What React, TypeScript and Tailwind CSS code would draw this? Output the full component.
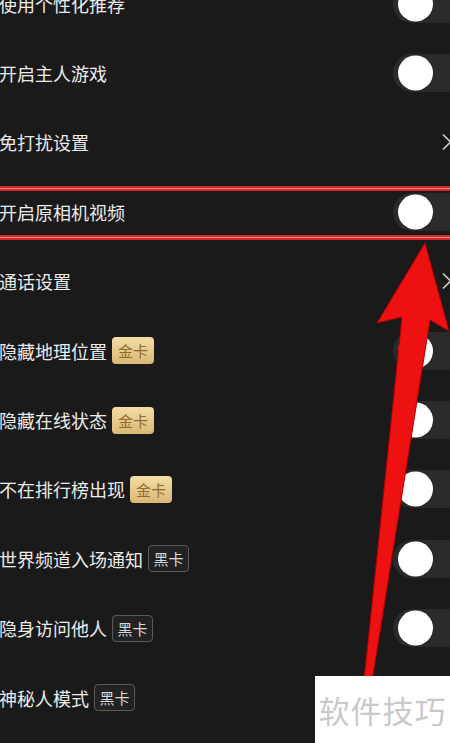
import React from 'react'

type Row = {
    label: string
    kind: 'toggle' | 'link'
    badge?: 'gold' | 'black'
    highlight?: boolean
}

const rows: Row[] = [
    { label: '使用个性化推荐', kind: 'toggle' },
    { label: '开启主人游戏', kind: 'toggle' },
    { label: '免打扰设置', kind: 'link' },
    { label: '开启原相机视频', kind: 'toggle', highlight: true },
    { label: '通话设置', kind: 'link' },
    { label: '隐藏地理位置', kind: 'toggle', badge: 'gold' },
    { label: '隐藏在线状态', kind: 'toggle', badge: 'gold' },
    { label: '不在排行榜出现', kind: 'toggle', badge: 'gold' },
    { label: '世界频道入场通知', kind: 'toggle', badge: 'black' },
    { label: '隐身访问他人', kind: 'toggle', badge: 'black' },
    { label: '神秘人模式', kind: 'toggle', badge: 'black' },
]

function Badge({ type }: { type: 'gold' | 'black' }) {
    if (type === 'gold') {
        return (
            <span className="ml-[5px] flex h-[27px] w-[42px] items-center justify-center rounded-[4px] bg-gradient-to-b from-[#f3dea6] to-[#d9b874] text-[15px] leading-none text-[#94692c]">
                金卡
            </span>
        )
    }
    return (
        <span className="ml-[5px] flex h-[27px] w-[41px] items-center justify-center rounded-[4px] border border-[#5a5a5a] bg-[#222] text-[15px] leading-none text-[#d8d8d8]">
            黑卡
        </span>
    )
}

function Toggle() {
    return (
        <div className="absolute left-[393px] top-1/2 h-[38px] w-[80px] -translate-y-1/2 rounded-full bg-[#2b2b2b]">
            <div className="absolute left-[5px] top-1/2 h-[35px] w-[35px] -translate-y-1/2 rounded-full bg-white" />
        </div>
    )
}

function Chevron() {
    return (
        <svg className="absolute left-[441px] top-1/2 -translate-y-1/2" width="12" height="18" viewBox="0 0 12 18" fill="none">
            <path d="M2 1.5 L9.5 9 L2 16.5" stroke="#cfcfcf" strokeWidth="1.6" />
        </svg>
    )
}

export default function App() {
    return (
        <div
            className="relative h-[743px] w-[450px] overflow-hidden bg-[#1a1a1a]"
            style={{ fontFamily: '"Noto Sans CJK SC", "Noto Sans", sans-serif' }}
        >
            <div className="-mt-[31px] flex flex-col">
                {rows.map((row, i) => (
                    <div key={i} className="relative flex h-[69.4px] items-center">
                        <span className="-ml-[1px] text-[18px] leading-none text-[#ececec]">{row.label}</span>
                        {row.badge && <Badge type={row.badge} />}
                        {row.kind === 'toggle' ? <Toggle /> : <Chevron />}
                        {row.highlight && (
                            <div className="pointer-events-none absolute inset-x-0 top-[9px] bottom-[7px] flex flex-col justify-between">
                                <div className="h-[5px] border-y-2 border-[#d42a2a] bg-[#f08a8a]" />
                                <div className="h-[5px] border-y-2 border-[#d42a2a] bg-[#f08a8a]" />
                            </div>
                        )}
                    </div>
                ))}
            </div>

            {/* arrow annotation */}
            <svg className="pointer-events-none absolute left-0 top-0" width="450" height="743" viewBox="0 0 450 743">
                <polygon
                    points="425,243 449,331 430,320 369,700 362,700 402,317 377,323"
                    fill="#ee1111"
                    stroke="#b00000"
                    strokeWidth="1"
                    strokeLinejoin="round"
                />
            </svg>

            {/* watermark */}
            <div className="absolute left-[315px] top-[676px] flex h-[67px] w-[135px] items-center justify-center bg-white">
                <span className="text-[31px] leading-none tracking-[1px] text-[#c9c9c9]">软件技巧</span>
            </div>
        </div>
    )
}
